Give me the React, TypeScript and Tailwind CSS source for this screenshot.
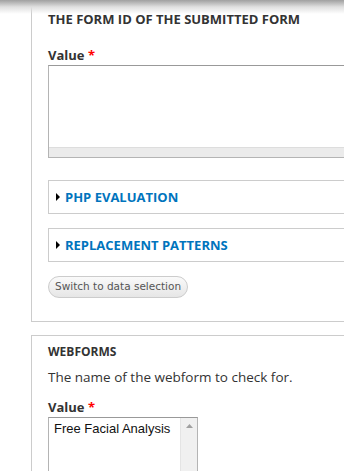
import React from "react";

const sans = { fontFamily: '"Segoe UI", "Open Sans", "Noto Sans", sans-serif' };

function Collapsed({ label }: { label: string }) {
  return (
    <div className="h-[34px] border border-[#ccc] border-r-0 flex items-center pl-[7px]">
      <svg width="4" height="8" viewBox="0 0 4 8" className="mr-[5px]">
        <path d="M0 0 L4 4 L0 8 Z" fill="#000" />
      </svg>
      <span className="text-[13px] font-bold text-[#0074bd] leading-none">{label}</span>
    </div>
  );
}

export default function App() {
  return (
    <div className="w-[344px] h-[471px] overflow-hidden bg-white relative text-[#333]" style={sans}>
      <div className="pl-[31px]">
        <div className="border-l border-b border-[#ccc] pl-[16px] pt-[12px] pb-[23px]">
          <div className="text-[13px] font-bold leading-[14px] whitespace-nowrap">THE FORM ID OF THE SUBMITTED FORM</div>
          <div className="mt-[21px] text-[13px] font-bold leading-[16px]">
            Value <span className="text-[#f00]">*</span>
          </div>
          <div className="mt-[2px] h-[93px] border border-[#b4b4b4] border-t-[#999] border-r-0 flex flex-col">
            <div className="flex-1 bg-white" />
            <div className="h-[10px] bg-[#ebebeb] border-t border-[#ddd]" />
          </div>
          <div className="mt-[22px]">
            <Collapsed label="PHP EVALUATION" />
          </div>
          <div className="mt-[14px]">
            <Collapsed label="REPLACEMENT PATTERNS" />
          </div>
          <button
            className="mt-[14px] h-[22px] px-[6px] rounded-full border border-[#ccc] bg-gradient-to-b from-[#fafafa] to-[#e6e6e6] text-[10.5px] text-[#555] flex items-center"
            style={{ fontFamily: '"DejaVu Sans", Verdana, sans-serif' }}
          >
            Switch to data selection
          </button>
        </div>
        <div className="mt-[13px] border-l border-t border-[#ccc] pl-[16px] pt-[9px]">
          <div className="text-[12px] font-bold leading-[14px]">WEBFORMS</div>
          <div className="mt-[10px] text-[13.5px] leading-[16px]">The name of the webform to check for.</div>
          <div className="mt-[14px] text-[13px] font-bold leading-[16px]">
            Value <span className="text-[#f00]">*</span>
          </div>
          <div className="mt-[2px] w-[150px] h-[80px] border border-[#b4b4b4] border-t-[#999] flex">
            <div
              className="flex-1 pl-[5px] pt-[3px] text-[13px] leading-[16px] text-[#111]"
              style={{ fontFamily: '"Liberation Sans", Arial, sans-serif' }}
            >
              Free Facial Analysis
            </div>
            <div className="w-[17px] bg-[#f0f0f0] border-l border-[#e4e4e4] flex justify-center pt-[6px]">
              <svg width="7" height="4" viewBox="0 0 7 4">
                <path d="M0 4 L3.5 0 L7 4 Z" fill="#a0a0a0" />
              </svg>
            </div>
          </div>
        </div>
      </div>
      <div className="absolute inset-x-0 top-0 h-[14px] bg-gradient-to-b from-[#a0a0a0] via-[#e0e0e0] to-transparent pointer-events-none" />
    </div>
  );
}
